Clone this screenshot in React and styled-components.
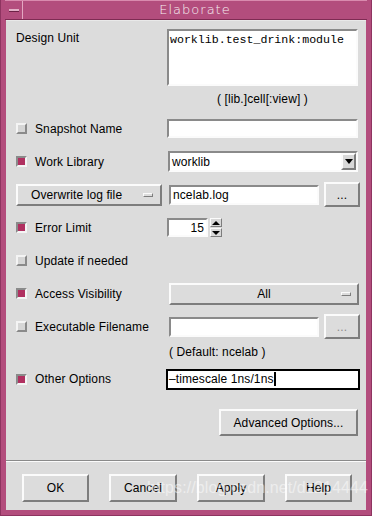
import React from 'react';
import styled, { createGlobalStyle, css } from 'styled-components';

const Global = createGlobalStyle`
  html, body { margin: 0; padding: 0; background: #dcdcdc; }
  body { font-family: "Liberation Sans", Arial, sans-serif; font-size: 12px; color: #000; letter-spacing: 0.1px; }
  * { box-sizing: border-box; }
`;

const raised = css`
  border: 2px solid;
  border-color: #fbfbfb #7d7d7d #7d7d7d #fbfbfb;
`;
const sunken = css`
  border: 2px solid;
  border-color: #8a8a8a #fbfbfb #fbfbfb #8a8a8a;
`;

const Window = styled.div`
  position: relative;
  width: 372px;
  height: 516px;
  background: #b34d7d;
  padding: 0 5px 5px;
  display: flex;
  flex-direction: column;
  border-left: 1px solid #8e3460;
  border-right: 1px solid #8e3460;
  border-bottom: 1px solid #8e3460;
`;

const TitleBar = styled.div`
  height: 20px;
  display: flex;
  align-items: stretch;
  margin: 0 -1px;
  border-top: 1px solid #d98aae;
  border-bottom: 1px solid #7e2b53;
`;

const MenuButton = styled.div`
  width: 18px;
  display: flex;
  align-items: center;
  justify-content: center;
  border-right: 1px solid #e3a7c2;
`;

const MenuDash = styled.span`
  width: 10px;
  height: 3px;
  background: #e2b0c7;
  border-bottom: 1px solid #6d2246;
`;

const Title = styled.div`
  flex: 1;
  text-align: center;
  color: #f6eef2;
  font-family: "DejaVu Sans", "Liberation Sans", sans-serif;
  font-weight: 300;
  font-size: 13px;
  letter-spacing: 1px;
  line-height: 18px;
`;

const Body = styled.div`
  flex: 1;
  background: #dcdcdc;
  display: flex;
  flex-direction: column;
  border-top: 1px solid #e9e9e9;
`;

const Form = styled.div`
  padding: 8px 8px 0 10px;
  display: flex;
  flex-direction: column;
`;

const Row = styled.div`
  display: grid;
  grid-template-columns: 151px 1fr;
  align-items: ${p => (p.$top ? 'start' : 'center')};
  height: ${p => p.$h}px;
`;

const Label = styled.div`
  display: flex;
  align-items: center;
  gap: 8px;
  padding-top: ${p => p.$pt || 0}px;
  white-space: nowrap;
`;

const Check = styled.span`
  width: 11px;
  height: 11px;
  flex: none;
  border: 2px solid;
  ${p =>
    p.$on
      ? css`border-color: #8a8a8a #f4f4f4 #f4f4f4 #8a8a8a; background: #b03060;`
      : css`border-color: #f4f4f4 #8a8a8a #8a8a8a #f4f4f4; background: #d6d6d6;`}
`;

const TextArea = styled.div`
  ${sunken};
  background: #fff;
  height: 57px;
  font-family: "Liberation Mono", "Courier New", monospace;
  font-size: 11.6px;
  letter-spacing: 0;
  padding: 2px 1px;
  line-height: 14px;
`;

const Hint = styled.div`
  text-align: ${p => (p.$left ? 'left' : 'center')};
  padding-left: ${p => p.$pl || 0}px;
  grid-column: 2;
`;

const Field = styled.div`
  ${sunken};
  background: #fff;
  height: ${p => p.$h || 20}px;
  width: ${p => (p.$w ? `${p.$w}px` : 'auto')};
  margin-left: ${p => p.$ml || 0}px;
  display: flex;
  align-items: center;
  padding: 0 2px;
  justify-content: ${p => (p.$right ? 'flex-end' : 'flex-start')};
  white-space: nowrap;
`;

const FocusField = styled.div`
  border: 2px solid #000;
  background: #fff;
  height: 21px;
  margin: 0 -2px 0 -1px;
  display: flex;
  align-items: center;
  padding: 0 1px;
  white-space: nowrap;
`;

const Caret = styled.span`
  display: inline-block;
  width: 2px;
  height: 14px;
  background: #000;
`;

const Combo = styled.div`
  ${sunken};
  background: #fff;
  height: 21px;
  margin-left: 1px;
  display: flex;
  align-items: stretch;
`;

const ComboText = styled.div`
  flex: 1;
  display: flex;
  align-items: center;
  padding-left: 2px;
`;

const ArrowButton = styled.div`
  ${raised};
  width: 15px;
  background: #d8d8d8;
  display: flex;
  align-items: center;
  justify-content: center;
`;

const Tri = styled.span`
  width: 0;
  height: 0;
  border-left: ${p => p.$s}px solid transparent;
  border-right: ${p => p.$s}px solid transparent;
  ${p =>
    p.$up
      ? css`border-bottom: ${p.$h}px solid #000;`
      : css`border-top: ${p.$h}px solid #000;`}
`;

const Button = styled.div`
  ${raised};
  background: #dcdcdc;
  height: ${p => p.$h || 25}px;
  width: ${p => (p.$w ? `${p.$w}px` : 'auto')};
  display: flex;
  align-items: center;
  justify-content: center;
  color: ${p => (p.$disabled ? '#8c8c8c' : '#000')};
  white-space: nowrap;
  flex: none;
`;

const OptionButton = styled.div`
  ${raised};
  background: #dcdcdc;
  height: ${p => p.$h}px;
  width: ${p => p.$w}px;
  margin-left: ${p => p.$ml || 0}px;
  display: flex;
  align-items: center;
  justify-content: ${p => (p.$center ? 'center' : 'flex-start')};
  padding-left: ${p => p.$pl || 0}px;
  position: relative;
`;

const OptionMark = styled.span`
  position: absolute;
  right: ${p => p.$r}px;
  top: 50%;
  margin-top: -2px;
  width: 10px;
  height: 4px;
  border: 1px solid;
  border-color: #fbfbfb #7d7d7d #7d7d7d #fbfbfb;
  background: #dcdcdc;
`;

const Inline = styled.div`
  display: flex;
  align-items: center;
  gap: ${p => p.$gap || 0}px;
`;

const Spin = styled.div`
  display: flex;
  flex-direction: column;
  gap: 1px;
  margin-left: 2px;
`;

const SpinBtn = styled.div`
  border: 1px solid;
  border-color: #fbfbfb #7d7d7d #7d7d7d #fbfbfb;
  background: #d8d8d8;
  width: 12px;
  height: 9px;
  display: flex;
  align-items: center;
  justify-content: center;
`;

const ActionRow = styled.div`
  display: flex;
  justify-content: flex-end;
  margin-top: 12px;
`;

const Separator = styled.div`
  margin-top: 24px;
  height: 2px;
  border-top: 1px solid #8a8a8a;
  border-bottom: 1px solid #fbfbfb;
`;

const ButtonBar = styled.div`
  display: flex;
  justify-content: center;
  gap: 20px;
  padding: 12px 0 0 2px;
`;

const Watermark = styled.div`
  position: absolute;
  left: 146px;
  top: 479px;
  font-size: 16px;
  color: rgba(255, 255, 255, 0.5);
  white-space: nowrap;
  pointer-events: none;
`;

export default function App() {
  return (
    <>
      <Global />
      <Window>
        <TitleBar>
          <MenuButton>
            <MenuDash />
          </MenuButton>
          <Title>Elaborate</Title>
        </TitleBar>
        <Body>
          <Form>
            <Row $h={57} $top>
              <Label $pt={2}>Design Unit</Label>
              <TextArea>worklib.test_drink:module</TextArea>
            </Row>
            <Row $h={26}>
              <Hint>( [lib.]cell[:view] )</Hint>
            </Row>
            <Row $h={33}>
              <Label>
                <Check />
                Snapshot Name
              </Label>
              <Field $h={19} />
            </Row>
            <Row $h={33}>
              <Label>
                <Check $on />
                Work Library
              </Label>
              <Combo>
                <ComboText>worklib</ComboText>
                <ArrowButton>
                  <Tri $s={4} $h={5} />
                </ArrowButton>
              </Combo>
            </Row>
            <Row $h={33}>
              <OptionButton $w={146} $h={22} $pl={13}>
                Overwrite log file
                <OptionMark $r={7} />
              </OptionButton>
              <Inline $gap={5}>
                <Field $w={150} $ml={2}>ncelab.log</Field>
                <Button $w={36} $h={25}>...</Button>
              </Inline>
            </Row>
            <Row $h={33}>
              <Label>
                <Check $on />
                Error Limit
              </Label>
              <Inline>
                <Field $w={41} $h={19} $right>15</Field>
                <Spin>
                  <SpinBtn>
                    <Tri $up $s={4} $h={4} />
                  </SpinBtn>
                  <SpinBtn>
                    <Tri $s={4} $h={4} />
                  </SpinBtn>
                </Spin>
              </Inline>
            </Row>
            <Row $h={33}>
              <Label>
                <Check />
                Update if needed
              </Label>
            </Row>
            <Row $h={33}>
              <Label>
                <Check $on />
                Access Visibility
              </Label>
              <OptionButton $w={190} $h={22} $ml={2} $center>
                All
                <OptionMark $r={6} />
              </OptionButton>
            </Row>
            <Row $h={33}>
              <Label>
                <Check />
                Executable Filename
              </Label>
              <Inline $gap={5}>
                <Field $w={150} $ml={2} />
                <Button $w={36} $h={25} $disabled>...</Button>
              </Inline>
            </Row>
            <Row $h={18}>
              <Hint $left $pl={2}>( Default: ncelab )</Hint>
            </Row>
            <Row $h={36}>
              <Label>
                <Check $on />
                Other Options
              </Label>
              <FocusField>
                –timescale 1ns/1ns
                <Caret />
              </FocusField>
            </Row>
            <ActionRow>
              <Button $w={139} $h={27}>Advanced Options...</Button>
            </ActionRow>
          </Form>
          <Separator />
          <ButtonBar>
            <Button $w={67} $h={28}>OK</Button>
            <Button $w={68} $h={28}>Cancel</Button>
            <Button $w={68} $h={28}>Apply</Button>
            <Button $w={67} $h={28}>Help</Button>
          </ButtonBar>
        </Body>
        <Watermark>https://blog.csdn.net/dz214444</Watermark>
      </Window>
    </>
  );
}
